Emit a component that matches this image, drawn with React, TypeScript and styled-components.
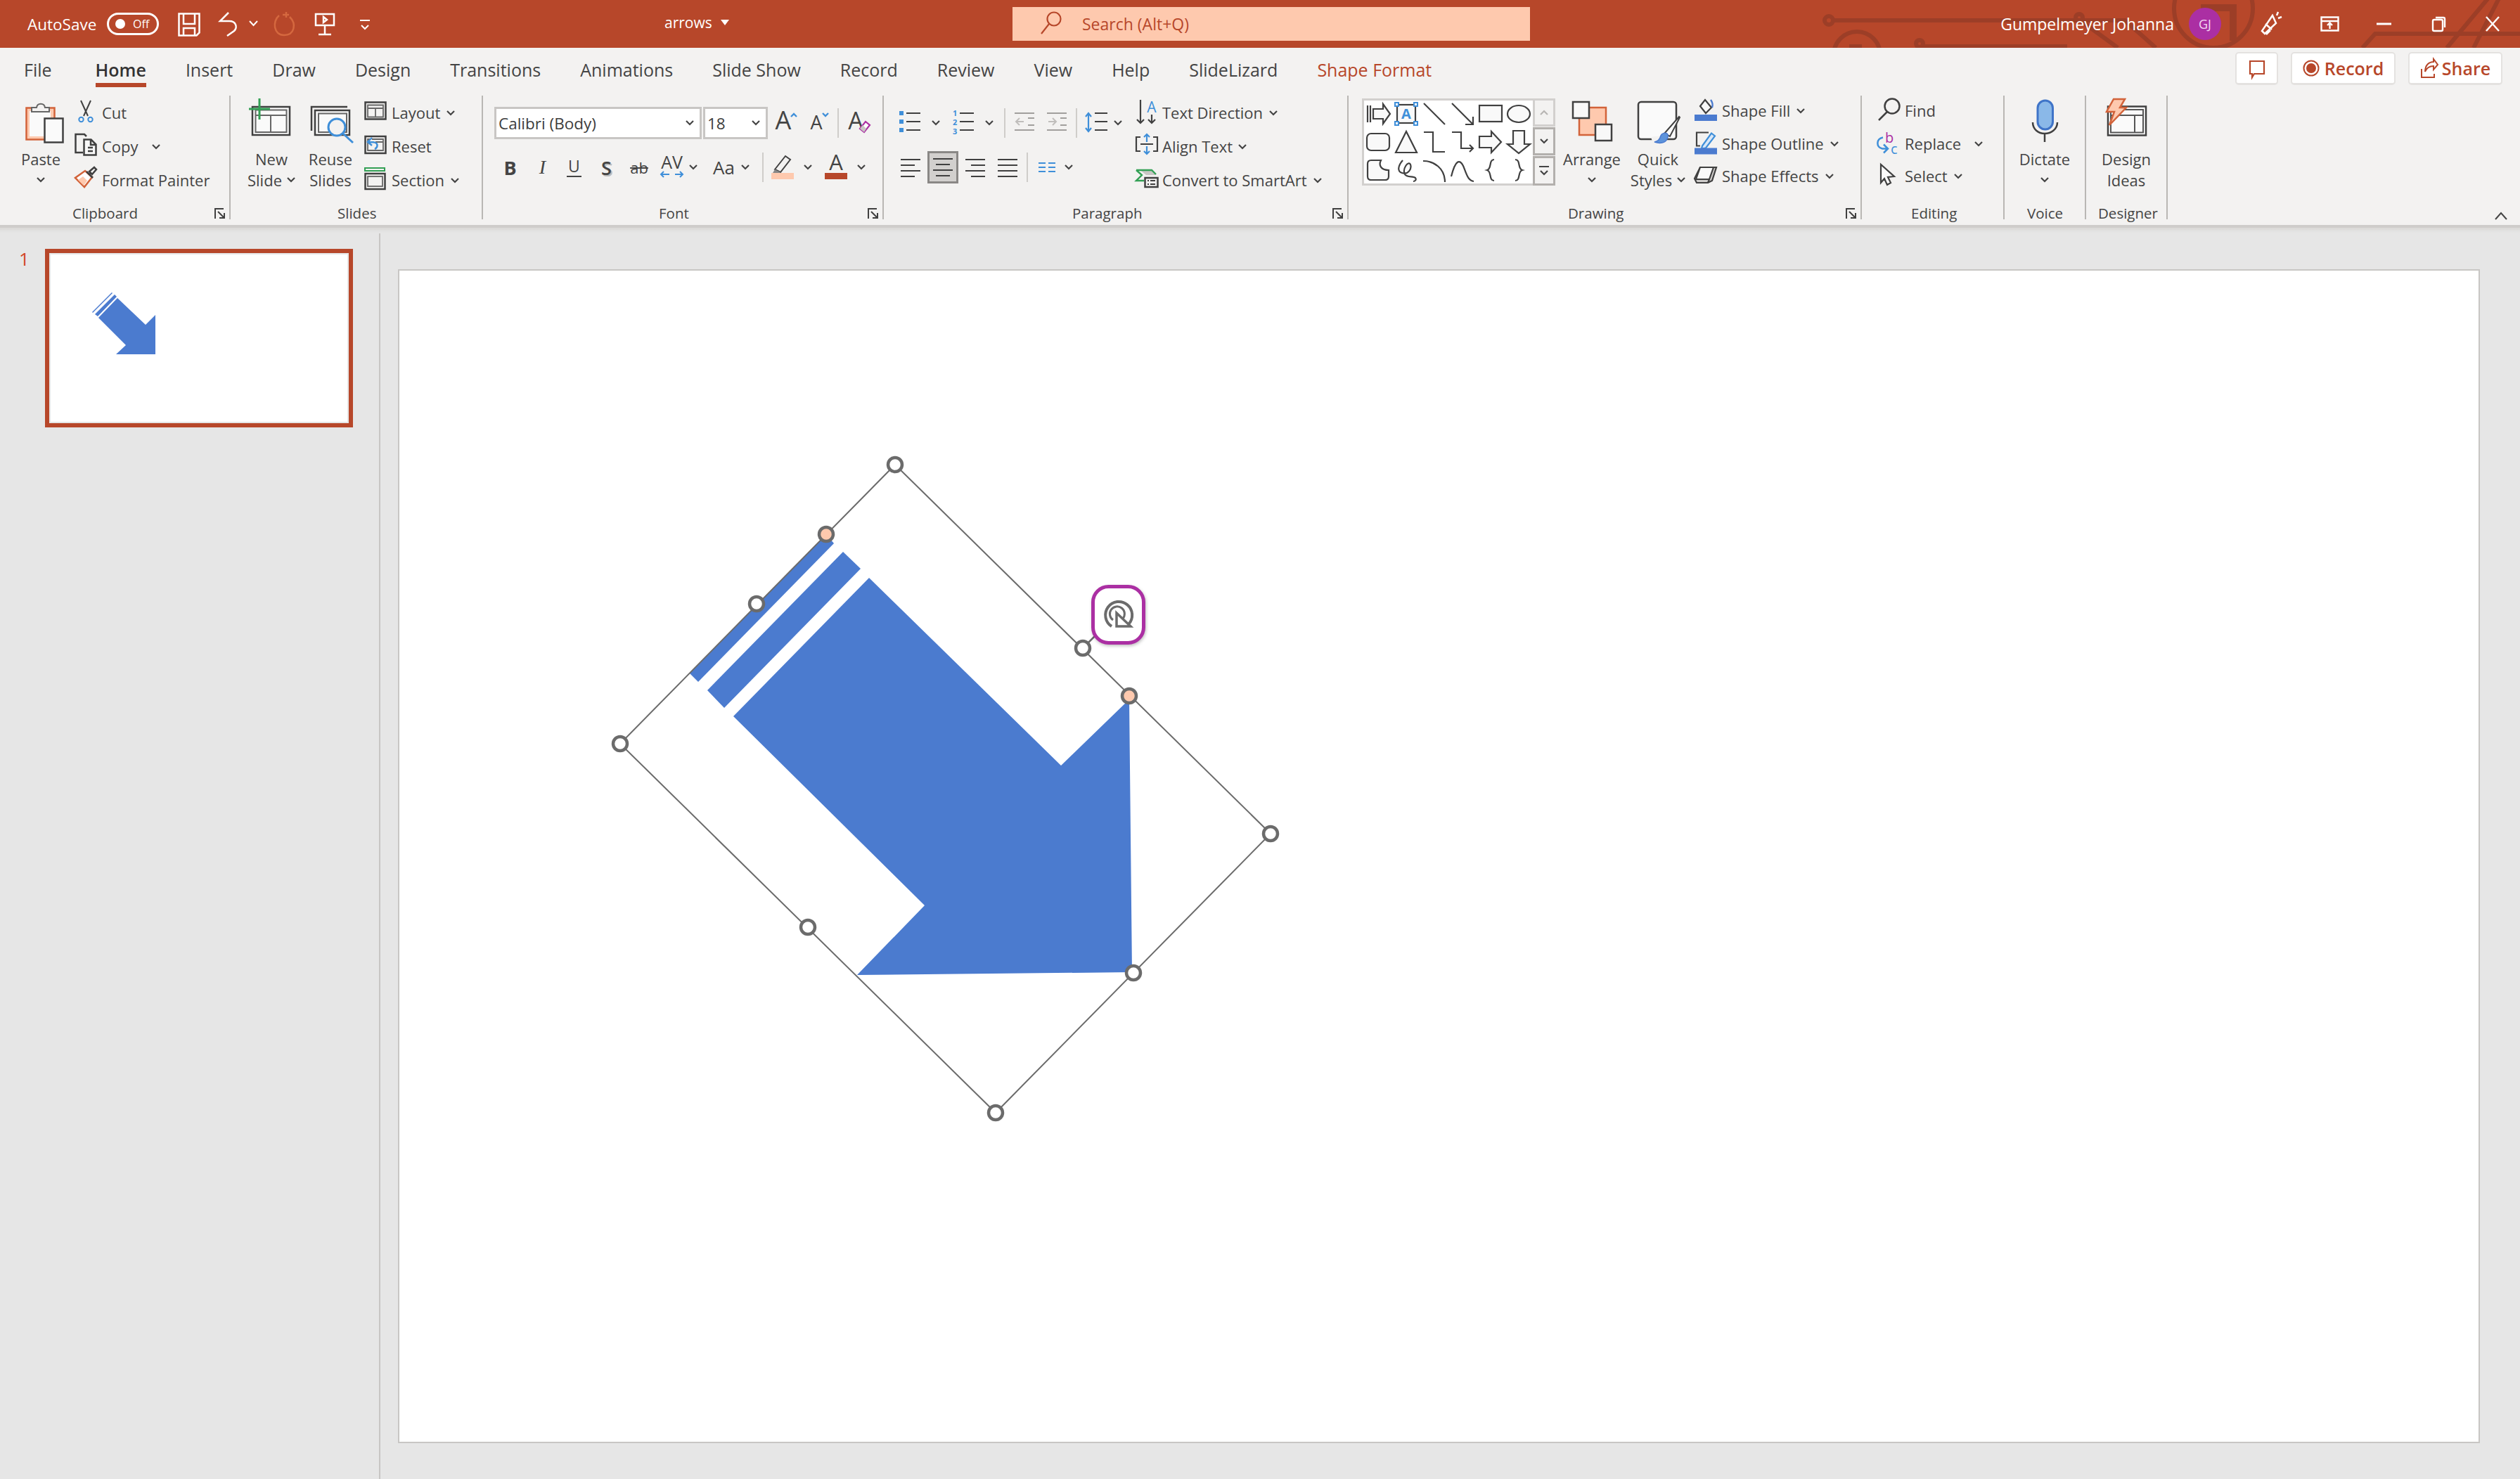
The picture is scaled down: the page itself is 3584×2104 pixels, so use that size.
import React from "react";
import styled, { createGlobalStyle } from "styled-components";

const Global = createGlobalStyle`
  html, body { margin: 0; padding: 0; background: #e6e6e6; }
  body { font-family: "Open Sans", "Noto Sans", sans-serif; font-size: 22px; color: #444; }
  * { box-sizing: border-box; }
`;

const DK = "#404040", OR = "#d2633a", PE = "#fec9ae", BL = "#3f8fd9", GR = "#33a055", SH = "#4b7bcf", PK = "#ab2fa3", RUST = "#b7472a";

const Root = styled.div`width: 3584px; height: 2104px; display: flex; flex-direction: column; overflow: hidden;`;

/* ---------- generic drawing helpers ---------- */
const Svg = styled.svg`display: block; flex: none; overflow: visible;`;
type IcoP = { x: number; y: number; w: number; h: number; c?: string; sw?: number; children?: React.ReactNode };
const Ico = ({ x, y, w, h, c = DK, sw = 2.5, children }: IcoP) => (
  <Svg width={w} height={h} viewBox={`${x} ${y} ${w} ${h}`} fill="none" stroke={c} strokeWidth={sw}>{children}</Svg>
);
const Chev = () => (
  <Svg width={12} height={8} viewBox="0 0 12 8" fill="none" stroke="#444" strokeWidth={2.2}><path d="M1 1l5 5 5-5" /></Svg>
);

/* ---------- title bar ---------- */
const TitleBar = styled.header`
  position: relative; height: 68px; flex: none; display: flex; align-items: center;
  background: ${RUST}; color: #fff;
`;
const Decor = styled.svg`position: absolute; left: 0; top: 0; pointer-events: none;`;
const QuickAccess = styled.div`position: relative; width: 945px; flex: none; display: flex; align-items: center; padding-left: 39px; height: 68px;`;
const AutoSaveLabel = styled.span`width: 113px; flex: none; font-size: 22.5px; color: #fff;`;
const Toggle = styled.div`
  width: 74px; height: 32px; border: 3px solid #fff; border-radius: 16px; flex: none;
  display: flex; align-items: center; padding-left: 9px; gap: 11px; font-size: 16px; color: #fff;
`;
const Knob = styled.i`width: 14px; height: 14px; border-radius: 50%; background: #fff; display: block; flex: none;`;
const Gap = styled.div<{ $ml: number }>`margin-left: ${p => p.$ml}px; flex: none; display: flex; align-items: center;`;
const FileName = styled.div`position: relative; width: 495px; flex: none; display: flex; align-items: center; gap: 12px; font-size: 21px; color: #fff; margin-top: -4px;`;
const Caret = styled.i`width: 0; height: 0; border-left: 6px solid transparent; border-right: 6px solid transparent; border-top: 8px solid #fff; display: block;`;
const SearchBox = styled.div`
  position: relative; width: 736px; height: 48px; flex: none; background: ${PE}; color: ${RUST};
  display: flex; align-items: center; padding-left: 38px; gap: 29px; font-size: 23px;
`;
const UserArea = styled.div`position: relative; flex: 1; display: flex; align-items: center; justify-content: flex-end; padding-right: 29px;`;
const UserName = styled.span`font-size: 23px; color: #fff; margin-right: 21px;`;
const Avatar = styled.div`width: 46px; height: 46px; border-radius: 50%; background: ${PK}; color: #f4d6f2; font-size: 18px; display: flex; align-items: center; justify-content: center; flex: none;`;

/* ---------- tab row ---------- */
const TabRow = styled.nav`height: 68px; flex: none; background: #f3f2f1; display: flex; align-items: flex-start; padding-left: 34px;`;
const Tab = styled.div<{ $on?: boolean; $accent?: boolean; $ml?: number }>`
  margin-left: ${p => p.$ml ?? 56}px; height: 56px; padding-top: 15px; line-height: 33px; font-size: 25px;
  color: ${p => (p.$accent ? RUST : p.$on ? "#333" : "#444")}; font-weight: ${p => (p.$on ? 600 : 400)};
  border-bottom: ${p => (p.$on ? `6px solid ${RUST}` : "none")};
  &:first-child { margin-left: 0; }
`;
const TabActions = styled.div`margin-left: auto; padding: 6px 25px 0 0; display: flex; gap: 18px;`;
const ActionBtn = styled.div<{ $w: number }>`
  width: ${p => p.$w}px; height: 47px; background: #fff; border: 2px solid #e4e2e0; border-bottom-width: 3px; border-radius: 5px;
  color: ${RUST}; font-weight: 600; font-size: 25px; display: flex; align-items: center; justify-content: center; gap: 7px;
`;

/* ---------- ribbon ---------- */
const Ribbon = styled.section`position: relative; height: 184px; flex: none; background: #f3f2f1; display: flex; align-items: flex-start;`;
const Group = styled.div<{ $w: number }>`
  position: relative; width: ${p => p.$w}px; height: 176px; flex: none; border-right: 2px solid #b9b7b4;
  display: flex; flex-direction: column;
`;
const Body = styled.div<{ $pl?: number; $pt?: number; $col?: boolean }>`
  height: 155px; flex: none; display: flex; flex-direction: ${p => (p.$col ? "column" : "row")}; align-items: flex-start;
  padding-left: ${p => p.$pl ?? 0}px; padding-top: ${p => p.$pt ?? 0}px;
`;
const Label = styled.div<{ $pl: number }>`height: 24px; line-height: 24px; padding-left: ${p => p.$pl}px; white-space: nowrap; font-size: 20.5px;`;
const LauncherBox = styled.div`position: absolute; right: 5px; bottom: 0; width: 16px; height: 16px;`;
const Launcher = () => (
  <LauncherBox>
    <Svg width={16} height={16} viewBox="0 0 16 16" fill="none" stroke={DK} strokeWidth={2}>
      <path d="M1 15V1h12M5 5l9 9M14 7v7H7" />
    </Svg>
  </LauncherBox>
);

const Large = styled.div<{ $w: number; $ml?: number }>`
  width: ${p => p.$w}px; margin-left: ${p => p.$ml ?? 0}px; flex: none; display: flex; flex-direction: column; align-items: center;
`;
const LargeIcon = styled.div`height: 75px; flex: none;`;
const LargeLine = styled.div`height: 30px; line-height: 30px; display: flex; align-items: center; gap: 7px; white-space: nowrap;`;

const SmallCol = styled.div<{ $ml?: number; $mt?: number }>`flex: none; display: flex; flex-direction: column; margin-left: ${p => p.$ml ?? 0}px; margin-top: ${p => p.$mt ?? 1}px;`;
const SmallRow = styled.div<{ $h?: number }>`height: ${p => p.$h ?? 48}px; display: flex; align-items: center; white-space: nowrap;`;
const RowText = styled.span<{ $ml?: number }>`margin-left: ${p => p.$ml ?? 7}px; margin-top: -2px;`;
const ChevSlot = styled.span<{ $ml?: number }>`margin-left: ${p => p.$ml ?? 9}px; display: flex;`;

const ToolRow = styled.div<{ $mt?: number }>`height: 46px; flex: none; display: flex; align-items: center; margin-top: ${p => p.$mt ?? 0}px;`;
const Tool = styled.div<{ $ml: number; $w?: number }>`
  margin-left: ${p => p.$ml}px; ${p => (p.$w ? `width: ${p.$w}px;` : "")} flex: none; display: flex; align-items: center; justify-content: center;
`;
const ToolSep = styled.div<{ $ml: number }>`margin-left: ${p => p.$ml}px; width: 2px; height: 42px; background: #cfcdca; flex: none;`;
const Glyph = styled.span<{ $b?: boolean; $i?: boolean; $u?: boolean; $s?: boolean; $strike?: boolean; $size?: number }>`
  font-size: ${p => p.$size ?? 24}px; line-height: 1; color: #444;
  font-weight: ${p => (p.$b ? 700 : 400)};
  font-style: ${p => (p.$i ? "italic" : "normal")};
  ${p => (p.$i ? `font-family: "Liberation Serif", serif;` : "")}
  ${p => (p.$u ? `border-bottom: 2.5px solid #444; padding: 0 2px 2px;` : "")}
  ${p => (p.$s ? `text-shadow: 2px 2px 0 #bbb; font-weight: 600;` : "")}
  ${p => (p.$strike ? `text-decoration: line-through; text-decoration-thickness: 2px;` : "")}
`;
const Combo = styled.div<{ $w: number; $ml?: number }>`
  width: ${p => p.$w}px; height: 46px; margin-left: ${p => p.$ml ?? 0}px; flex: none; background: #fff; border: 3px solid #c8c6c4;
  display: flex; align-items: center; justify-content: space-between; padding: 0 8px 0 3px; font-size: 22.5px;
  color: #3d3d3d;
`;
const ActiveTool = styled.div<{ $ml: number }>`
  margin-left: ${p => p.$ml}px; width: 44px; height: 46px; flex: none; background: #d2d0ce; border: 3px solid #8a8886;
  display: flex; align-items: center; justify-content: center;
`;
const LeftTools = styled.div`width: 358px; flex: none; padding-top: 16px;`;

const Gallery = styled.div`
  width: 275px; height: 124px; margin-top: 4px; flex: none; background: #fff; border: 3px solid #d2d0ce; display: flex;
`;
const ShapeGrid = styled.div`width: 240px; height: 118px; display: grid; grid-template-columns: repeat(6, 40px); grid-auto-rows: 40px; margin-top: -1px;`;
const ShapeCell = styled.div`display: flex; align-items: center; justify-content: center;`;
const ScrollCol = styled.div`width: 32px; margin: -3px -3px -3px 0; display: flex; flex-direction: column; background: #f3f2f1;`;
const ScrollBtn = styled.div<{ $h: number; $dark?: boolean }>`
  height: ${p => p.$h}px; flex: none; display: flex; align-items: center; justify-content: center;
  border: 3px solid ${p => (p.$dark ? "#b3b0ad" : "#d2d0ce")};
  margin-bottom: 1px;
`;
const Collapse = styled.div`position: absolute; right: 18px; top: 166px; width: 18px; height: 10px;`;
const RibbonShade = styled.div`
  height: 12px; flex: none; background: linear-gradient(#cfcdcb 0 4px, #dcdbd9 4px 6px, #e2e2e1 8px, #e6e6e6 100%);
`;

/* ---------- workspace ---------- */
const Workspace = styled.main`flex: 1; min-height: 0; display: flex; background: #e6e6e6;`;
const Sidebar = styled.aside`width: 541px; flex: none; border-right: 2px solid #c8c6c4; display: flex; align-items: flex-start; padding: 22px 0 0 27px;`;
const SlideNo = styled.div`width: 37px; flex: none; color: #d24726; font-size: 26px; line-height: 28px;`;
const Thumb = styled.div`width: 438px; height: 254px; flex: none; border: 6px solid ${RUST}; padding: 2px; background: #e6e6e6;`;
const ThumbPage = styled.div`width: 100%; height: 100%; background: #fff;`;
const Stage = styled.div`flex: 1; min-width: 0; padding: 51px 57px 51px 25px; display: flex;`;
const Slide = styled.div`flex: 1; background: #fff; border: 2px solid #c8c6c4;`;

/* ---------- small icons ---------- */
const Gal = ({ children }: { children: React.ReactNode }) => (
  <ShapeCell>
    <Svg width={36} height={36} viewBox="0 0 36 36" fill="#f9f9f9" stroke={DK} strokeWidth={2.2}>{children}</Svg>
  </ShapeCell>
);

const shapes = [
  <><path d="M3 6v24M7 6v24" fill="none" /><path d="M11 11h14V4l10 14-10 14v-7H11z" /></>,
  <><rect x="5" y="5" width="26" height="26" /><text x="18" y="25" fontSize="20" fontWeight="700" fill={BL} stroke="none" textAnchor="middle">A</text><g fill="#fff" stroke={BL} strokeWidth="2"><rect x="2" y="2" width="5" height="5" /><rect x="29" y="2" width="5" height="5" /><rect x="2" y="29" width="5" height="5" /><rect x="29" y="29" width="5" height="5" /></g></>,
  <path d="M3 3l30 30" fill="none" />,
  <path d="M3 3l30 30M33 22v11H22" fill="none" />,
  <rect x="2" y="6" width="32" height="23" />,
  <ellipse cx="18" cy="18" rx="16" ry="12" />,
  <rect x="2" y="6" width="32" height="24" rx="6" />,
  <path d="M18 3l15 30H3z" />,
  <path d="M3 4h13v28h17" fill="none" />,
  <path d="M3 4h13v23h17M28 22l5 5-5 5" fill="none" />,
  <path d="M2 10h17V3l14 15-14 15v-7H2z" />,
  <path d="M10 2h16v19h8L18 34 2 21h8z" />,
  <path d="M8 4h14c-4 8 1 14 11 14v9c0 3-2 5-5 5H8c-3 0-5-2-5-5V9c0-3 2-5 5-5z" />,
  <path d="M13 4c-7 8-8 16-1 18 9 3 14-6 12-12-3-6-12 6-8 14 3 5 12 2 15 5 2 3-1 5-3 5" fill="none" />,
  <path d="M2 5c15 0 31 10 31 30" fill="none" />,
  <path d="M2 27C8 3 14 2 19 12c4 9 6 21 15 22" fill="none" />,
  <path d="M23 3c-8 0-3 13-10 15 7 2 2 15 10 15" fill="none" />,
  <path d="M13 3c8 0 3 13 10 15-7 2-2 15-10 15" fill="none" />,
];

const lines = (xs: [number, number][], ys: number[]) => ys.map((y, i) => <path key={i} d={`M${xs[i % xs.length][0]} ${y}H${xs[i % xs.length][1]}`} />);

export default function App() {
  return (
    <Root>
      <Global />
      <TitleBar>
        <Decor width={3584} height={68} viewBox="0 0 3584 68" fill="none" stroke="#9c3e27" strokeWidth={6}>
          <circle cx="2601" cy="29" r="6" /><path d="M2608 29H3022L3066 68" />
          <circle cx="2641" cy="78" r="33" /><path d="M2630 66h18" />
          <circle cx="2730" cy="62" r="5" /><path d="M2735 66H2940" />
          <circle cx="2957" cy="25" r="5" /><path d="M2960 30L3012 68" />
          <circle cx="3148" cy="12" r="56" /><path d="M3130 11H3176V58" strokeWidth={10} />
          <path d="M3360 68L3378 48H3584M3480 68L3545 -10M3518 68L3558 -10" />
        </Decor>
        <QuickAccess>
          <AutoSaveLabel>AutoSave</AutoSaveLabel>
          <Toggle><Knob />Off</Toggle>
          <Gap $ml={27}>
            <Ico x={253} y={16} w={32} h={40} c="#fff">
              <path d="M254.5 21.5h29v27l-4 4h-25z" /><path d="M261 22v14h16V22M261 52V42h16v10" />
            </Ico>
          </Gap>
          <Gap $ml={27}>
            <Ico x={312} y={16} w={28} h={40} c="#fff">
              <path d="M325 20l-12 12h13c10 0 12 9 7 14l-10 7" />
            </Ico>
          </Gap>
          <Gap $ml={14}>
            <Ico x={354} y={28} w={13} h={10} c="#fff" sw={2}><path d="M355 29l5.500 6 5.500-6" /></Ico>
          </Gap>
          <Gap $ml={21}>
            <Ico x={388} y={16} w={33} h={40} c="#d5683f">
              <path d="M411 23h-9M407 19v8" /><path d="M412 26c10 10 7 26-8 26-15 0-17-20-7-28" />
            </Ico>
          </Gap>
          <Gap $ml={27}>
            <Ico x={448} y={16} w={28} h={40} c="#fff">
              <path d="M449 22h26v16h-26zM462 38v13M453 51h18" /><path d="M460 26l5 4-5 4z" />
            </Ico>
          </Gap>
          <Gap $ml={35}>
            <Ico x={511} y={24} w={17} h={20} c="#fff" sw={2}><path d="M512 29h14M514 36l5 5 5-5" /></Ico>
          </Gap>
        </QuickAccess>
        <FileName>arrows<Caret /></FileName>
        <SearchBox>
          <Ico x={1478} y={16} w={32} h={36} c={RUST} sw={2.2}>
            <circle cx="1499" cy="27" r="9.500" /><path d="M1492 34l-11 14" />
          </Ico>
          Search (Alt+Q)
        </SearchBox>
        <UserArea>
          <UserName>Gumpelmeyer Johanna</UserName>
          <Avatar>GJ</Avatar>
          <Gap $ml={56}>
            <Ico x={3215} y={14} w={31} h={40} c="#fff">
              <path d="M3232 22l-15 22 4 4 16-15zM3222 34l9 8M3223 49l6-6M3240 17l-2 5M3245 24l-5 2" />
            </Ico>
          </Gap>
          <Gap $ml={54}>
            <Ico x={3300} y={18} w={27} h={30} c="#fff" sw={2.4}>
              <path d="M3301.500 23.500h24v19h-24zM3302 29h23M3313.500 40v-8M3310 35l3.500-3.500 3.500 3.500" />
            </Ico>
          </Gap>
          <Gap $ml={53}>
            <Ico x={3380} y={26} w={21} h={12} c="#fff" sw={3}><path d="M3380 32h21" /></Ico>
          </Gap>
          <Gap $ml={58}>
            <Ico x={3459} y={18} w={19} h={30} c="#fff" sw={2.4}>
              <path d="M3460 29c0-1 1-2 2-2h10c1 0 2 1 2 2v12c0 1-1 2-2 2h-10c-1 0-2-1-2-2zM3464 24h11c1 0 2 1 2 2v12" />
            </Ico>
          </Gap>
          <Gap $ml={57}>
            <Ico x={3535} y={18} w={20} h={30} c="#fff" sw={2.4}><path d="M3536 23l18 20M3554 23l-18 20" /></Ico>
          </Gap>
        </UserArea>
      </TitleBar>

      <TabRow>
        <Tab>File</Tab>
        <Tab $on $ml={62}>Home</Tab>
        <Tab>Insert</Tab>
        <Tab>Draw</Tab>
        <Tab>Design</Tab>
        <Tab>Transitions</Tab>
        <Tab>Animations</Tab>
        <Tab>Slide Show</Tab>
        <Tab>Record</Tab>
        <Tab>Review</Tab>
        <Tab>View</Tab>
        <Tab>Help</Tab>
        <Tab>SlideLizard</Tab>
        <Tab $accent>Shape Format</Tab>
        <TabActions>
          <ActionBtn $w={61}>
            <Ico x={3195} y={82} w={24} h={30} c={RUST} sw={2.2}><path d="M3197 87h20v18h-14l-3 5v-5h-3z" /></Ico>
          </ActionBtn>
          <ActionBtn $w={149}>
            <Ico x={3272} y={84} w={24} h={26} c={RUST} sw={2}><circle cx="3284" cy="97" r="10.500" /><circle cx="3284" cy="97" r="6" fill={RUST} /></Ico>
            Record
          </ActionBtn>
          <ActionBtn $w={134}>
            <Ico x={3440} y={84} w={24} h={26} c={RUST} sw={2}><path d="M3442 98v12h18v-5M3447 102c0-10 6-14 12-14v-4l6 8-6 7v-5c-6 0-10 3-12 8z" /></Ico>
            Share
          </ActionBtn>
        </TabActions>
      </TabRow>

      <Ribbon>
        {/* Clipboard */}
        <Group $w={328}>
          <Body $pl={16}>
            <Large $w={84}>
              <LargeIcon>
                <Ico x={16} y={136} w={84} h={76}>
                  <rect x="37.500" y="153.500" width="40" height="45" fill={PE} stroke={OR} />
                  <rect x="42" y="158" width="30" height="36" fill="#fafafa" stroke="none" />
                  <path d="M45 159v-6h7c1-7 11-7 12 0h6v6z" fill="#f3f2f1" stroke="#666" strokeWidth={2} />
                  <rect x="63.500" y="168.500" width="26" height="34" fill="#fafafa" />
                </Ico>
              </LargeIcon>
              <LargeLine>Paste</LargeLine>
              <LargeLine><Chev /></LargeLine>
            </Large>
            <SmallCol $ml={6}>
              <SmallRow>
                <Ico x={106} y={137} w={32} h={48} sw={2}>
                  <path d="M115 143l10 22M129 143l-10 22" />
                  <circle cx="115.500" cy="170" r="3.200" stroke={BL} /><circle cx="128.500" cy="170" r="3.200" stroke={BL} />
                </Ico>
                <RowText>Cut</RowText>
              </SmallRow>
              <SmallRow>
                <Ico x={106} y={185} w={32} h={48}>
                  <path d="M118 217h-10.500v-26h12.500l3 3" />
                  <path d="M119.500 198.500h10l7 7v15h-17zM129 199v7h7M125 210h7M125 215h7" fill="#f8f8f8" />
                </Ico>
                <RowText>Copy</RowText>
                <ChevSlot $ml={19}><Chev /></ChevSlot>
              </SmallRow>
              <SmallRow>
                <Ico x={106} y={233} w={32} h={48}>
                  <path d="M107 253l13 13 11-14-10-9z" fill="#fff" stroke={OR} />
                  <path d="M111 256l8 8 5-7-6-6z" fill={PE} stroke="none" />
                  <path d="M123 244l9 9M128 247l8-8" stroke={DK} />
                  <path d="M127 244l7-6 3 3-6 7z" fill="#f3f2f1" />
                </Ico>
                <RowText>Format Painter</RowText>
              </SmallRow>
            </SmallCol>
          </Body>
          <Label $pl={103}>Clipboard</Label>
          <Launcher />
        </Group>

        {/* Slides */}
        <Group $w={359}>
          <Body $pl={17}>
            <Large $w={82}>
              <LargeIcon>
                <Ico x={345} y={136} w={82} h={76}>
                  <rect x="359" y="152" width="53" height="40" fill="#fafafa" />
                  <path d="M363.500 156.500h44v31.500h-44zM364 164h43M385 164v24" stroke="#666" strokeWidth={2} />
                  <path d="M354 155h30M369 140v30" stroke={GR} strokeWidth={3} />
                </Ico>
              </LargeIcon>
              <LargeLine>New</LargeLine>
              <LargeLine>Slide<Chev /></LargeLine>
            </Large>
            <Large $w={86}>
              <LargeIcon>
                <Ico x={427} y={136} w={86} h={76}>
                  <path d="M443 186v-34h51" />
                  <rect x="448" y="157" width="49" height="35" fill="#fafafa" />
                  <rect x="453" y="161.500" width="40" height="26.500" stroke="#666" strokeWidth={2} />
                  <circle cx="479" cy="181" r="12" fill="#f3f2f1" stroke={BL} strokeWidth={3} />
                  <path d="M488 190l14 13" stroke={BL} strokeWidth={3} />
                </Ico>
              </LargeIcon>
              <LargeLine>Reuse</LargeLine>
              <LargeLine>Slides</LargeLine>
            </Large>
            <SmallCol $ml={5}>
              <SmallRow>
                <Ico x={518} y={137} w={32} h={48}>
                  <rect x="519.500" y="145.500" width="29" height="24" /><path d="M523 149.500h22v17h-22zM523 154h22M534 154v12" stroke="#666" strokeWidth={1.8} />
                </Ico>
                <RowText>Layout</RowText><ChevSlot><Chev /></ChevSlot>
              </SmallRow>
              <SmallRow>
                <Ico x={518} y={185} w={32} h={48}>
                  <rect x="519.500" y="194" width="29" height="24" /><path d="M523 198h22v16h-22zM534 202h11" stroke="#666" strokeWidth={1.8} />
                  <path d="M533 212c4-2 5-7 1-9-2-1-5-1-9-1M529 196l-6 6 6 5" stroke={BL} strokeWidth={2.4} fill="#f3f2f1" />
                </Ico>
                <RowText>Reset</RowText>
              </SmallRow>
              <SmallRow>
                <Ico x={518} y={233} w={32} h={48}>
                  <rect x="519" y="239" width="28" height="4" stroke={GR} strokeWidth={2} />
                  <rect x="519.500" y="247" width="28" height="22" /><rect x="523" y="251" width="21" height="14" stroke="#666" strokeWidth={1.8} />
                </Ico>
                <RowText>Section</RowText><ChevSlot><Chev /></ChevSlot>
              </SmallRow>
            </SmallCol>
          </Body>
          <Label $pl={152}>Slides</Label>
        </Group>

        {/* Font */}
        <Group $w={570}>
          <Body $pt={16} $col>
            <ToolRow>
              <Combo $w={295} $ml={16}>Calibri (Body)<Chev /></Combo>
              <Combo $w={92} $ml={2}>18<Chev /></Combo>
              <Tool $ml={11}>
                <Ico x={1103} y={152} w={34} h={46}>
                  <text x="1114" y="184" fontSize="36" fill="#444" stroke="none" textAnchor="middle">A</text>
                  <path d="M1125 166l4-4 4 4" stroke={BL} strokeWidth={2.4} />
                </Ico>
              </Tool>
              <Tool $ml={15}>
                <Ico x={1152} y={152} w={28} h={46}>
                  <text x="1161" y="184" fontSize="27" fill="#444" stroke="none" textAnchor="middle">A</text>
                  <path d="M1170 161l4 4 4-4" stroke={BL} strokeWidth={2.4} />
                </Ico>
              </Tool>
              <ToolSep $ml={11} />
              <Tool $ml={12}>
                <Ico x={1204} y={152} w={34} h={46}>
                  <text x="1216" y="184" fontSize="34" fill="#444" stroke="none" textAnchor="middle">A</text>
                  <path d="M1222 183l8-10 6 5-8 10z" fill="#fff" stroke={PK} strokeWidth={2.2} />
                  <path d="M1222 183l4-5 5 5-3 5z" fill="#c8c6c4" stroke="none" />
                </Ico>
              </Tool>
            </ToolRow>
            <ToolRow $mt={17}>
              <Tool $ml={31} $w={15}><Glyph $b $size={27}>B</Glyph></Tool>
              <Tool $ml={32} $w={13}><Glyph $i $size={28}>I</Glyph></Tool>
              <Tool $ml={30} $w={17}><Glyph $u $size={23}>U</Glyph></Tool>
              <Tool $ml={30} $w={15}><Glyph $s $size={27}>S</Glyph></Tool>
              <Tool $ml={23} $w={32}><Glyph $strike $size={22}>ab</Glyph></Tool>
              <Tool $ml={14}>
                <Ico x={939} y={216} w={33} h={44}>
                  <text x="955.500" y="240" fontSize="25" fill="#444" stroke="none" textAnchor="middle" letterSpacing="0">AV</text>
                  <path d="M940 248h12M944 244l-4 4 4 4M960 248h11M967 244l4 4-4 4" stroke={BL} strokeWidth={2} />
                </Ico>
              </Tool>
              <Tool $ml={8}><Chev /></Tool>
              <Tool $ml={22} $w={31}><Glyph $size={26}>Aa</Glyph></Tool>
              <Tool $ml={9}><Chev /></Tool>
              <ToolSep $ml={18} />
              <Tool $ml={11}>
                <Ico x={1097} y={216} w={32} h={44}>
                  <path d="M1102 241l15-19 7 5-14 18z" fill="#f3f2f1" strokeWidth={2} />
                  <path d="M1102 241l-3 5h10l1-1z" fill="#888" stroke="none" />
                  <rect x="1097" y="246" width="32" height="9" fill={PE} stroke="none" />
                </Ico>
              </Tool>
              <Tool $ml={14}><Chev /></Tool>
              <Tool $ml={18}>
                <Ico x={1173} y={216} w={32} h={44}>
                  <text x="1189" y="242" fontSize="31" fill="#444" stroke="none" textAnchor="middle">A</text>
                  <rect x="1173" y="246" width="32" height="9" fill={RUST} stroke="none" />
                </Ico>
              </Tool>
              <Tool $ml={14}><Chev /></Tool>
            </ToolRow>
          </Body>
          <Label $pl={250}>Font</Label>
          <Launcher />
        </Group>

        {/* Paragraph */}
        <Group $w={661}>
          <Body>
            <LeftTools>
              <ToolRow>
                <Tool $ml={22}>
                  <Ico x={1279} y={152} w={30} h={46} sw={2}>
                    <path d="M1279 161h6M1279 173h6M1279 185h6" stroke={BL} strokeWidth={6} />
                    <path d="M1289 161h20M1289 173h20M1289 185h20" />
                  </Ico>
                </Tool>
                <Tool $ml={16}><Chev /></Tool>
                <Tool $ml={18}>
                  <Ico x={1355} y={152} w={30} h={46} sw={2}>
                    <g fill={BL} stroke="none" fontSize="11" fontWeight="700">
                      <text x="1355" y="165">1</text><text x="1355" y="178">2</text><text x="1355" y="191">3</text>
                    </g>
                    <path d="M1365 161h20M1365 173h20M1365 185h20" />
                  </Ico>
                </Tool>
                <Tool $ml={16}><Chev /></Tool>
                <ToolSep $ml={15} />
                <Tool $ml={13}>
                  <Ico x={1443} y={152} w={28} h={46} c="#a19f9d" sw={2}>
                    <path d="M1443 161h28M1443 185h28M1462 168h9M1462 178h9" />
                    <path d="M1445 173h11M1450 168l-5 5 5 5" stroke="#c0bebc" />
                  </Ico>
                </Tool>
                <Tool $ml={18}>
                  <Ico x={1489} y={152} w={28} h={46} c="#a19f9d" sw={2}>
                    <path d="M1489 161h28M1489 185h28M1508 168h9M1508 178h9" />
                    <path d="M1491 173h11M1497 168l5 5-5 5" stroke="#c0bebc" />
                  </Ico>
                </Tool>
                <ToolSep $ml={13} />
                <Tool $ml={11}>
                  <Ico x={1543} y={152} w={32} h={46} sw={2}>
                    <path d="M1548 162v24M1544 166l4-5 4 5M1544 182l4 5 4-5" stroke={BL} strokeWidth={2.2} />
                    <path d="M1557 161h18M1557 173h18M1557 185h18" />
                  </Ico>
                </Tool>
                <Tool $ml={9}><Chev /></Tool>
              </ToolRow>
              <ToolRow $mt={17}>
                <Tool $ml={24}>
                  <Ico x={1281} y={216} w={28} h={40} sw={2}>{lines([[1281, 1309], [1281, 1301]], [225, 233, 241, 249])}</Ico>
                </Tool>
                <ActiveTool $ml={10}>
                  <Ico x={1327} y={219} w={28} h={36} sw={2}>{lines([[1327, 1355], [1331, 1351]], [225, 233, 241, 249])}</Ico>
                </ActiveTool>
                <Tool $ml={10}>
                  <Ico x={1373} y={216} w={28} h={40} sw={2}>{lines([[1373, 1401], [1381, 1401]], [225, 233, 241, 249])}</Ico>
                </Tool>
                <Tool $ml={18}>
                  <Ico x={1419} y={216} w={28} h={40} sw={2}>{lines([[1419, 1447]], [225, 233, 241, 249])}</Ico>
                </Tool>
                <ToolSep $ml={13} />
                <Tool $ml={15}>
                  <Ico x={1477} y={226} w={24} h={22} c={BL} sw={2}>
                    <path d="M1477 231h10M1491 231h10M1477 237h10M1491 237h10M1477 243h10M1491 243h10" />
                  </Ico>
                </Tool>
                <Tool $ml={13}><Chev /></Tool>
              </ToolRow>
            </LeftTools>
            <SmallCol>
              <SmallRow>
                <Ico x={1615} y={137} w={32} h={48} sw={2.2}>
                  <path d="M1622 142v33M1617 170l5 5 5-5M1638 163v12M1633 170l5 5 5-5" />
                  <text x="1638" y="160" fontSize="21" fill={BL} stroke="none" textAnchor="middle">A</text>
                </Ico>
                <RowText $ml={6}>Text Direction</RowText><ChevSlot><Chev /></ChevSlot>
              </SmallRow>
              <SmallRow>
                <Ico x={1615} y={185} w={32} h={48} sw={2.2}>
                  <path d="M1622 195h-6v20h6M1640 195h6v20h-6M1622 205h18" />
                  <path d="M1631 191v11M1627 195l4-4 4 4M1631 208v11M1627 215l4 4 4-4" stroke={BL} strokeWidth={2.2} />
                </Ico>
                <RowText $ml={6}>Align Text</RowText><ChevSlot $ml={8}><Chev /></ChevSlot>
              </SmallRow>
              <SmallRow>
                <Ico x={1615} y={233} w={32} h={48}>
                  <path d="M1623 243h15l6 6h-14z" fill="#c8c6c4" stroke="none" />
                  <path d="M1616 242h22l6 6M1616 242l8 7-8 8h11" stroke={GR} strokeWidth={2.4} />
                  <rect x="1628.500" y="253" width="18" height="13" fill="#f3f2f1" />
                  <path d="M1632 257h2M1636 257h7M1632 262h2M1636 262h7" strokeWidth={1.8} />
                </Ico>
                <RowText $ml={6}>Convert to SmartArt</RowText><ChevSlot><Chev /></ChevSlot>
              </SmallRow>
            </SmallCol>
          </Body>
          <Label $pl={268}>Paragraph</Label>
          <Launcher />
        </Group>

        {/* Drawing */}
        <Group $w={730}>
          <Body $pl={19}>
            <Gallery>
              <ShapeGrid>{shapes.map((s, i) => <Gal key={i}>{s}</Gal>)}</ShapeGrid>
              <ScrollCol>
                <ScrollBtn $h={40}>
                  <Svg width={12} height={8} viewBox="0 0 12 8" fill="none" stroke="#b8b6b4" strokeWidth={2.2}><path d="M1 7l5-5 5 5" /></Svg>
                </ScrollBtn>
                <ScrollBtn $h={40} $dark><Chev /></ScrollBtn>
                <ScrollBtn $h={42} $dark>
                  <Svg width={14} height={16} viewBox="0 0 14 16" fill="none" stroke="#444" strokeWidth={2.2}><path d="M0 2h14M2 8l5 5 5-5" /></Svg>
                </ScrollBtn>
              </ScrollCol>
            </Gallery>
            <Large $w={96} $ml={4}>
              <LargeIcon>
                <Ico x={2216} y={136} w={96} h={76}>
                  <rect x="2246" y="153" width="38" height="39" fill={PE} stroke={OR} />
                  <rect x="2237" y="145" width="23" height="23" fill="#f8f8f8" />
                  <rect x="2269" y="177" width="23" height="23" fill="#f8f8f8" />
                </Ico>
              </LargeIcon>
              <LargeLine>Arrange</LargeLine>
              <LargeLine><Chev /></LargeLine>
            </Large>
            <Large $w={92}>
              <LargeIcon>
                <Ico x={2312} y={136} w={92} h={76}>
                  <rect x="2330" y="145" width="54" height="53" rx="4" fill="#fafafa" />
                  <path d="M2349 198c3-1 9-1 17-2" stroke="#f3f2f1" strokeWidth={6} />
                  <path d="M2367 190l21-24 1 1-14 27z" fill="#fff" stroke={DK} strokeWidth={2} />
                  <path d="M2353 202c6-1 8-5 9-9 1-3 6-5 9-3 3 3 0 12-7 13-4 1-8 0-11-1z" fill="#5d93db" stroke={SH} strokeWidth={1.5} />
                </Ico>
              </LargeIcon>
              <LargeLine>Quick</LargeLine>
              <LargeLine>Styles<Chev /></LargeLine>
            </Large>
            <SmallCol $ml={6} $mt={-1}>
              <SmallRow $h={46.5}>
                <Ico x={2410} y={135} w={32} h={46.500} sw={2.2}>
                  <path d="M2418 151l7-9 9 11-8 8z" fill="#f8f8f8" />
                  <path d="M2433 142c3 4 3 8 2 11" stroke={SH} strokeWidth={2.4} />
                  <rect x="2410" y="163" width="32" height="9" fill={SH} stroke="none" />
                </Ico>
                <RowText>Shape Fill</RowText><ChevSlot><Chev /></ChevSlot>
              </SmallRow>
              <SmallRow $h={46.5}>
                <Ico x={2410} y={181.500} w={32} h={46.500} sw={2.2}>
                  <path d="M2430 188h-17v19h5" />
                  <path d="M2421 207l13-18 5 4-13 17-6 1z" fill="#d9e7f7" stroke={BL} />
                  <rect x="2410" y="210" width="32" height="9" fill={SH} stroke="none" />
                </Ico>
                <RowText>Shape Outline</RowText><ChevSlot><Chev /></ChevSlot>
              </SmallRow>
              <SmallRow $h={46.5}>
                <Ico x={2410} y={228} w={32} h={46.500} sw={2.2}>
                  <path d="M2418 238h23l-6 19-6 3h-16l-3-6z" fill="#cfcdcb" />
                  <path d="M2418 238l-6 17h19l6-17z" fill="#fafafa" />
                  <path d="M2431 255l-2 5" />
                </Ico>
                <RowText>Shape Effects</RowText><ChevSlot><Chev /></ChevSlot>
              </SmallRow>
            </SmallCol>
          </Body>
          <Label $pl={312}>Drawing</Label>
          <Launcher />
        </Group>

        {/* Editing */}
        <Group $w={203}>
          <Body $pl={22}>
            <SmallCol $mt={-1}>
              <SmallRow $h={46.5}>
                <Ico x={2670} y={135} w={32} h={46.500}>
                  <circle cx="2691" cy="151" r="10.500" /><path d="M2684 159l-12 12" />
                </Ico>
                <RowText>Find</RowText>
              </SmallRow>
              <SmallRow $h={46.5}>
                <Ico x={2670} y={181.500} w={32} h={46.500}>
                  <text x="2681" y="202" fontSize="20" fill={PK} stroke="none">b</text>
                  <text x="2689" y="218" fontSize="20" fill={BL} stroke="none">c</text>
                  <path d="M2678 195c-10 2-10 14-1 16h7M2679 205l6 6-6 6" stroke={BL} />
                </Ico>
                <RowText>Replace</RowText><ChevSlot $ml={19}><Chev /></ChevSlot>
              </SmallRow>
              <SmallRow $h={46.5}>
                <Ico x={2670} y={228} w={32} h={46.500} sw={2.2}>
                  <path d="M2675 234v26l5-6 4 9 5-3-4-8 9-1z" fill="#fafafa" />
                </Ico>
                <RowText>Select</RowText><ChevSlot><Chev /></ChevSlot>
              </SmallRow>
            </SmallCol>
          </Body>
          <Label $pl={70}>Editing</Label>
        </Group>

        {/* Voice */}
        <Group $w={116}>
          <Body>
            <Large $w={114}>
              <LargeIcon>
                <Ico x={2851} y={136} w={114} h={76}>
                  <rect x="2898" y="143" width="21.500" height="41" rx="10.700" fill="#8ab8e8" stroke="#3f74c8" strokeWidth={3} />
                  <path d="M2891 174c0 10 8 16 17 16s18-6 18-16M2908 190v12" />
                </Ico>
              </LargeIcon>
              <LargeLine>Dictate</LargeLine>
              <LargeLine><Chev /></LargeLine>
            </Large>
          </Body>
          <Label $pl={32}>Voice</Label>
        </Group>

        {/* Designer */}
        <Group $w={116}>
          <Body>
            <Large $w={114}>
              <LargeIcon>
                <Ico x={2967} y={136} w={114} h={76}>
                  <rect x="2998" y="151.500" width="54" height="41" fill="#fafafa" />
                  <path d="M3002 156h46v32.500h-46zM3002 164h46M3036 164v24" stroke="#555" strokeWidth={2} />
                  <path d="M3006 141h16l-7 12h9l-24 25 7-19h-11z" fill={PE} stroke={OR} />
                </Ico>
              </LargeIcon>
              <LargeLine>Design</LargeLine>
              <LargeLine>Ideas</LargeLine>
            </Large>
          </Body>
          <Label $pl={17}>Designer</Label>
        </Group>

        <Collapse>
          <Svg width={18} height={10} viewBox="0 0 18 10" fill="none" stroke="#444" strokeWidth={2}><path d="M1 10l8-9 8 9" /></Svg>
        </Collapse>
      </Ribbon>
      <RibbonShade />

      <Workspace>
        <Sidebar>
          <SlideNo>1</SlideNo>
          <Thumb>
            <ThumbPage>
              <Svg width={422} height={238} viewBox="72 362 422 238" fill={SH}>
                <polygon points="167,424 207,462 221,448 221,504 165,504 179,491 140,452" />
                <polygon points="163,419 166,422 139,450 135,447" />
                <polygon points="159,416 160,417 132,445 131,444" />
              </Svg>
            </ThumbPage>
          </Thumb>
        </Sidebar>
        <Stage>
          <Slide>
            <Svg width={2957} height={1666} viewBox="568 383 2957 1666" fill="none">
              <polygon points="1236,820 1509,1087 1606,993 1610,1381 1219,1385 1315,1286 1043,1017" fill={SH} />
              <polygon points="1199,783 1224,807 1030,1005 1006,980" fill={SH} />
              <polygon points="1175,758 1186,771 993,968 981,956" fill={SH} />
              <polygon points="1273,659 1807,1184 1416,1581 882,1056" stroke="#6b6b6b" strokeWidth={2} />
              <path d="M1540 920L1572 888" stroke="#6b6b6b" strokeWidth={2.5} />
              <rect x="1554.500" y="832.500" width="72" height="80" rx="22" fill="#fff" stroke={PK} strokeWidth={5} style={{ filter: "drop-shadow(1px 2px 2px rgba(0,0,0,.25))" }} />
              <g stroke="#6b6b6b" fill="none">
                <path d="M1581 889a19 19 0 1 1 24-3" strokeWidth={4} />
                <path d="M1583 880a10.500 10.500 0 1 1 14-2" strokeWidth={3} />
                <path d="M1588 870v19h20z" strokeWidth={3.5} fill="#fff" />
              </g>
              <g fill="#fff" stroke="#6b6b6b" strokeWidth={4.5}>
                {[[1273, 659], [1807, 1184], [1416, 1581], [882, 1056], [1540, 920], [1612, 1382], [1149, 1317], [1076, 857]].map(([x, y]) => (
                  <circle key={x} cx={x} cy={y} r={10} />
                ))}
                <circle cx={1175} cy={758} r={10} fill={PE} />
                <circle cx={1606} cy={988} r={10} fill={PE} />
              </g>
            </Svg>
          </Slide>
        </Stage>
      </Workspace>
    </Root>
  );
}
